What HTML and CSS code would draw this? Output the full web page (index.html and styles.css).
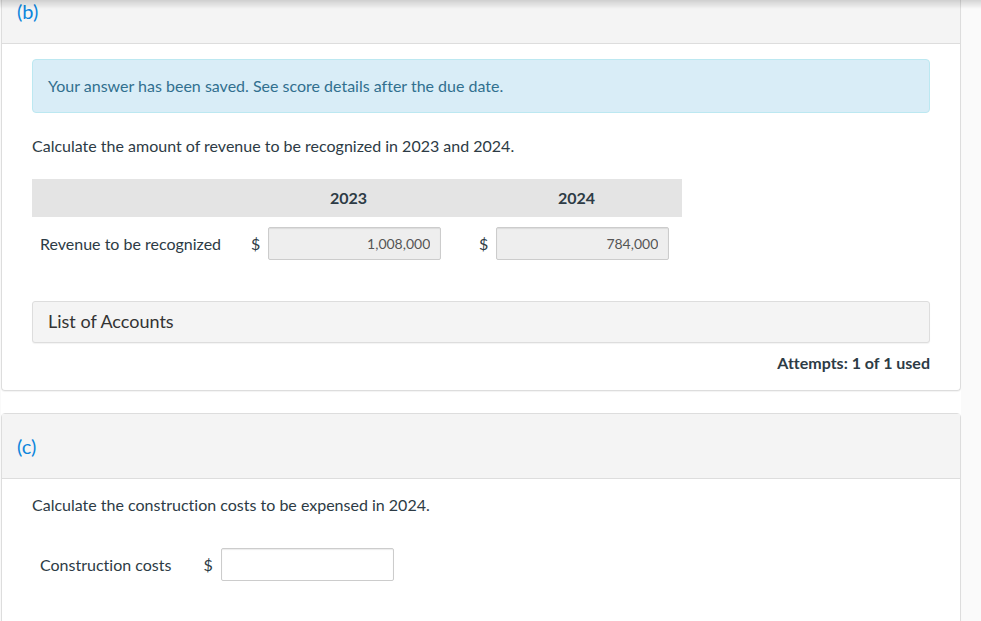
FILE: index.html
```
<!DOCTYPE html>
<html lang="en">
<head>
  <meta charset="UTF-8">
  <title>Assignment</title>
  <meta name="viewport" content="width=device-width, initial-scale=1.0">
  <link rel="stylesheet" href="styles.css">
</head>
<body>

<div class="top-shadow"></div>

<main class="content">
  <section class="panel">
    <div class="panel-heading panel-heading-scrolled">
      <h2><a href="#part-b">(b)</a></h2>
    </div>
    <div class="panel-body" id="part-b">
      <div class="alert">Your answer has been saved. See score details after the due date.</div>

      <p class="question">Calculate the amount of revenue to be recognized in 2023 and 2024.</p>

      <table class="answers answers-wide">
        <thead>
          <tr>
            <td></td>
            <td class="spacer"></td>
            <th scope="col" id="y2023">2023</th>
            <td class="spacer"></td>
            <th scope="col" id="y2024">2024</th>
          </tr>
        </thead>
        <tbody>
          <tr>
            <th scope="row" id="revenue">Revenue to be recognized</th>
            <td class="spacer"></td>
            <td>
              <div class="money">
                <span>$</span>
                <input type="text" value="1,008,000" aria-labelledby="revenue y2023" disabled>
              </div>
            </td>
            <td class="spacer"></td>
            <td>
              <div class="money">
                <span>$</span>
                <input type="text" value="784,000" aria-labelledby="revenue y2024" disabled>
              </div>
            </td>
          </tr>
        </tbody>
      </table>

      <button type="button" class="accounts">List of Accounts</button>
      <p class="attempts">Attempts: 1 of 1 used</p>
    </div>
  </section>

  <section class="panel">
    <div class="panel-heading">
      <h2><a href="#part-c">(c)</a></h2>
    </div>
    <div class="panel-body" id="part-c">
      <p class="question">Calculate the construction costs to be expensed in 2024.</p>

      <table class="answers">
        <tbody>
          <tr>
            <th scope="row"><label for="costs">Construction costs</label></th>
            <td class="spacer"></td>
            <td>
              <div class="money">
                <span>$</span>
                <input type="text" id="costs">
              </div>
            </td>
          </tr>
        </tbody>
      </table>
    </div>
  </section>
</main>

</body>
</html>
```
FILE: styles.css
```
* {
  box-sizing: border-box;
}

body {
  margin: 0;
  background-color: #fafafa;
  color: #2d3b45;
  font-family: Lato, "Liberation Sans", sans-serif;
  font-size: 16px;
  line-height: 22px;
  font-variant-ligatures: none;
}

/* shadow of the fixed bar above the page */
.top-shadow {
  position: fixed;
  top: 0;
  left: 0;
  right: 0;
  height: 9px;
  background: linear-gradient(rgba(0, 0, 0, 0.15), rgba(0, 0, 0, 0));
  pointer-events: none;
}

.content {
  margin: 0 20px 0 1px;
  min-height: 100vh;
  background-color: #fff;
}

.panel {
  border: 1px solid #ddd;
  border-radius: 4px;
  box-shadow: 0 1px 1px rgba(0, 0, 0, 0.05);
}

.panel:first-child {
  margin-bottom: 22px;
  border-top: 0;
  border-radius: 0 0 4px 4px;
}

.panel-heading {
  padding: 21px 15px;
  background-color: #f4f4f4;
  border-bottom: 1px solid #ddd;
}

.panel-heading-scrolled {
  padding-top: 0;
}

.panel-heading h2 {
  margin: 0;
  font-size: 20px;
  font-weight: 400;
}

.panel-heading a {
  color: #0d86dc;
  text-decoration: none;
}

.panel-body {
  padding: 15px 30px 16px;
}

.alert {
  margin-bottom: 22px;
  padding: 15px;
  background-color: #d9edf7;
  border: 1px solid #bce8f1;
  border-radius: 4px;
  color: #31708f;
}

.question {
  margin: 0 0 22px;
}

.answers {
  margin-bottom: 31px;
  border-collapse: collapse;
}

.answers th,
.answers td {
  padding: 10px 8px;
}

.answers .spacer {
  width: 16px;
  padding: 0;
}

.answers thead {
  background-color: #e4e4e4;
}

.answers thead th,
.answers thead td {
  padding: 8px;
}

.answers tbody th {
  font-weight: 400;
  text-align: left;
  white-space: nowrap;
}

.answers-wide {
  width: 650px;
  table-layout: fixed;
}

.answers-wide .spacer {
  width: 17px;
}

.answers-wide th[id^="y"] {
  width: 211px;
}

.money {
  display: flex;
  align-items: center;
  gap: 8px;
}

.money input {
  width: 173px;
  height: 33px;
  padding: 6px 10px;
  border: 1px solid #ccc;
  border-radius: 2px;
  box-shadow: inset 0 1px 1px rgba(0, 0, 0, 0.08);
  background-color: #fff;
  color: #555;
  font-family: inherit;
  font-size: 14px;
  text-align: right;
}

.money input:disabled {
  background-color: #eee;
}

.accounts {
  display: block;
  width: 100%;
  padding: 8px 15px 10px;
  background-color: #f4f4f4;
  border: 1px solid #ddd;
  border-radius: 3px;
  box-shadow: 0 1px 1px rgba(0, 0, 0, 0.05);
  color: #333;
  font-family: inherit;
  font-size: 18px;
  line-height: 22px;
  text-align: left;
}

.attempts {
  margin: 9px 0 0;
  font-weight: 700;
  text-align: right;
}
```
